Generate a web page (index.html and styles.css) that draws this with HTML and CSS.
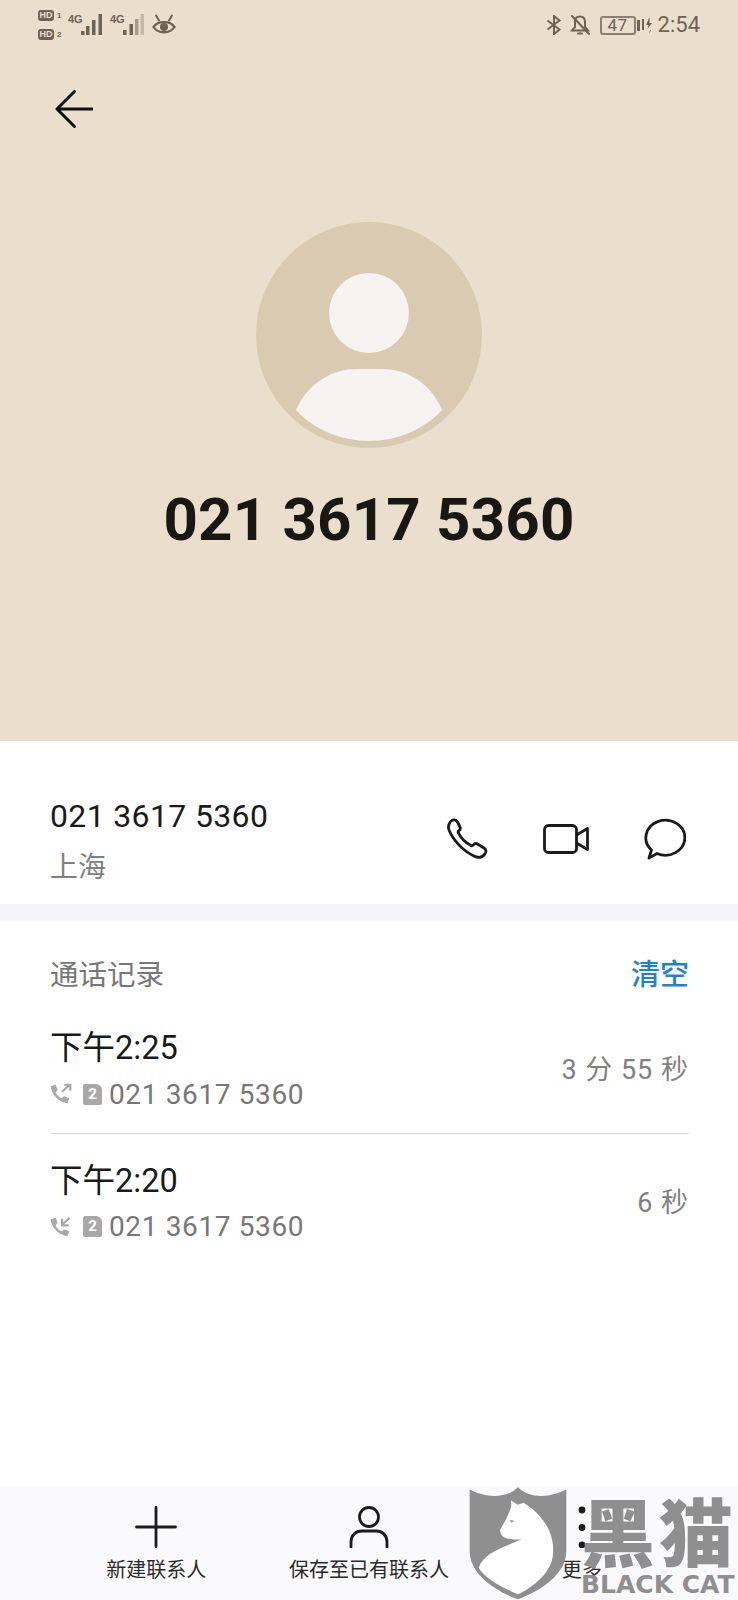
FILE: index.html
```html
<!DOCTYPE html>
<html lang="zh">
<head>
<meta charset="utf-8">
<title>通话记录</title>
<link rel="stylesheet" href="styles.css">
</head>
<body>
<div class="page">
  <header class="hero">
    <div class="status">
      <div class="status-left">
        <div class="hd-stack">
          <div class="hd-row"><span class="hd">HD</span><span class="sim-no">1</span></div>
          <div class="hd-row"><span class="hd">HD</span><span class="sim-no">2</span></div>
        </div>
        <div class="net">
          <span class="net-label">4G</span>
          <svg class="bars" viewBox="0 0 23 22"><rect x="1" y="17" width="3.5" height="4"/><rect x="6" y="12" width="3.5" height="9"/><rect x="12" y="6" width="3.5" height="15"/><rect x="18.5" y="0" width="3.5" height="21"/></svg>
        </div>
        <div class="net net-second">
          <span class="net-label">4G</span>
          <svg class="bars" viewBox="0 0 23 22"><rect x="1" y="16" width="3.5" height="5"/><rect x="7.5" y="10" width="3.5" height="11"/><rect x="13" y="5" width="3.5" height="16" opacity=".55"/><rect x="18.5" y="0" width="3.5" height="21" opacity=".3"/></svg>
        </div>
        <svg class="eye" viewBox="0 0 24 22" fill="none" stroke="#6d6355" stroke-width="2.3" stroke-linecap="round"><path d="M1.5 13 C6 6.5 18 6.5 22.5 13 C18 20 6 20 1.5 13Z"/><circle cx="12" cy="13" r="4" fill="#6d6355" stroke="none"/><path d="M4 1.5 L7 6.5 M20 1.5 L17 6.5" stroke-width="2"/></svg>
      </div>
      <div class="status-right">
        <svg class="bt" viewBox="0 0 16 20" fill="none" stroke="#6d6355" stroke-width="2"><path d="M1.5 5.5 L13.5 14.5 L8 19 V1 L13.5 5.5 L1.5 14.5"/></svg>
        <svg class="bell" viewBox="0 0 20 20" fill="none" stroke="#6d6355" stroke-width="2" stroke-linecap="round"><path d="M5 6.5 C5 3.5 7 1.5 10 1.5 C13 1.5 15 3.5 15 7 V12 L18 15.5 H2 L5 12 Z"/><path d="M8 18.5 H12"/><path d="M2 1 L19 19"/></svg>
        <div class="battery"><span class="battery-level">47</span></div>
        <span class="battery-nub"></span>
        <svg class="bolts" viewBox="0 0 12 18"><path d="M1 3 H3 V14 H1 Z" fill="#6d6355"/><path d="M8.5 1 L5 9 H7.5 L6.5 13 L11 7 H8.5 Z" fill="#6d6355"/><path d="M9 14 L8 18 L10 14 Z" fill="#6d6355"/></svg>
        <span class="clock">2:54</span>
      </div>
    </div>
    <svg class="back" viewBox="0 0 38 38" fill="none" stroke="#0d0d0d" stroke-width="3" stroke-linecap="round" stroke-linejoin="round"><path d="M37 19 H2 M19.5 1.5 L2 19 L19.5 36.5"/></svg>
    <svg class="avatar" viewBox="0 0 226 226"><circle cx="113" cy="113" r="113" fill="#d8cbb1"/><circle cx="113" cy="91" r="40" fill="#f6f3f0"/><path d="M40 188 C52 160 78 147 100 147 H126 C150 147 174 160 186 188 C168 208 140 219 113 219 C86 219 58 208 40 188 Z" fill="#f6f3f0"/></svg>
    <h1 class="title">021 3617 5360</h1>
  </header>

  <section class="info">
    <div class="info-text">
      <div class="info-number">021 3617 5360</div>
      <div class="info-place">上海</div>
    </div>
    <div class="actions">
      <svg class="act-phone" viewBox="0 0 42 42" fill="none" stroke="#1a1a1a" stroke-width="2.8" stroke-linejoin="round"><path d="M4.5 3.5 C7 1 10 1.5 11.5 4 L14 9 C14.8 10.5 14 12 12.5 13 C12 13.5 12 14 12.3 14.7 C14.5 19.5 20 25 25 27.5 C26 28 26.8 27.5 27.3 27 C28.5 25.5 30 25 31.5 26 L38 30 C40.5 31.5 40.5 34.5 38.5 36.5 C36 39.5 32 40 28 38 C17 33 7 22 3 12 C2 9 2.5 6 4.5 3.5 Z"/></svg>
      <svg class="act-cam" viewBox="0 0 46 30" fill="none" stroke="#1a1a1a" stroke-width="2.8" stroke-linejoin="round"><rect x="1.5" y="1.5" width="32" height="27" rx="4"/><path d="M33.5 11 L44.5 4.5 V25.5 L33.5 19"/></svg>
      <svg class="act-msg" viewBox="0 0 42 42" fill="none" stroke="#1a1a1a" stroke-width="2.8" stroke-linejoin="round"><path d="M7.5 32 A19.5 17.5 0 1 1 13 35.5 L5 40 Z"/></svg>
    </div>
  </section>

  <div class="band"></div>

  <section class="log">
    <div class="log-head">
      <span class="log-title">通话记录</span>
      <span class="log-clear">清空</span>
    </div>
    <div class="call">
      <div class="call-main">
        <div class="call-time">下午2:25</div>
        <div class="call-sub">
          <svg class="dir" viewBox="0 0 22 20" fill="none" stroke="#a8a8a8" stroke-width="2"><path d="M1.5 3 C2.5 11 9 17.5 17 18.5 L18.5 14 L14 12 L11.5 14 C9 13 7 11 6 8.5 L8 6 L6 1.5 Z" fill="#a8a8a8" stroke="none"/><path d="M12 8 L19 1.5 M14 1.5 H19.5 V7"/></svg>
          <span class="sim">2</span>
          <span class="call-number">021 3617 5360</span>
        </div>
      </div>
      <div class="call-duration">3 分 55 秒</div>
    </div>
    <div class="call call-last">
      <div class="call-main">
        <div class="call-time">下午2:20</div>
        <div class="call-sub">
          <svg class="dir" viewBox="0 0 22 20" fill="none" stroke="#a8a8a8" stroke-width="2"><path d="M1.5 3 C2.5 11 9 17.5 17 18.5 L18.5 14 L14 12 L11.5 14 C9 13 7 11 6 8.5 L8 6 L6 1.5 Z" fill="#a8a8a8" stroke="none"/><path d="M19 1.5 L12 8 M12 2.5 V8.5 H18"/></svg>
          <span class="sim">2</span>
          <span class="call-number">021 3617 5360</span>
        </div>
      </div>
      <div class="call-duration">6 秒</div>
    </div>
  </section>

  <nav class="tabs">
    <div class="tab">
      <svg class="tab-icon" viewBox="0 0 42 42" fill="none" stroke="#1c1c1c" stroke-width="2.8" stroke-linecap="round"><path d="M21 1.5 V40.5 M1.5 21 H40.5"/></svg>
      <span class="tab-label">新建联系人</span>
    </div>
    <div class="tab">
      <svg class="tab-icon" viewBox="0 0 42 42" fill="none" stroke="#1c1c1c" stroke-width="2.8" stroke-linecap="round"><circle cx="21" cy="11" r="9.5"/><path d="M3 41 V36 C3 29 8 25 14 25 H28 C34 25 39 29 39 36 V41"/></svg>
      <span class="tab-label">保存至已有联系人</span>
    </div>
    <div class="tab">
      <svg class="tab-icon" viewBox="0 0 42 42" fill="#1c1c1c"><circle cx="21" cy="4" r="3.4"/><circle cx="21" cy="21.5" r="3.4"/><circle cx="21" cy="39" r="3.4"/></svg>
      <span class="tab-label">更多</span>
    </div>
  </nav>

  <div class="mark">
    <svg class="mark-shield" viewBox="0 0 300 345"><path d="M2 10 C44 35 114 40 147 3 C179 40 249 35 292 10 L292 195 C292 265 214 315 147 340 C79 315 2 265 2 195 Z" fill="#8f8f8f"/><path d="M126 43 L146 56 L164 50 C220 85 258 140 252 205 C248 262 190 305 147 325 C100 305 45 275 29 245 C45 200 100 185 158 160 C135 162 115 158 108 155 C97 152 92 140 94 130 L112 98 C118 80 130 70 126 43 Z" fill="#fff"/><path d="M122 102 L136 104 L128 110 Z" fill="#8f8f8f"/></svg>
    <div class="mark-text">
      <div class="mark-cn">黑猫</div>
      <div class="mark-en">BLACK CAT</div>
    </div>
  </div>
</div>
</body>
</html>
```

FILE: styles.css
```css
* { box-sizing: border-box; }
html, body { margin: 0; padding: 0; background: #fff; }
body { font-family: Roboto, "Noto Sans CJK SC", sans-serif; color: #1a1a1a; }
svg { display: block; flex: none; }
.page { position: relative; width: 738px; height: 1600px; overflow: hidden; display: flex; flex-direction: column; background: #fff; }

.hero { height: 741px; background: #eadfcc; display: flex; flex-direction: column; flex: none; }
.status { display: flex; justify-content: space-between; align-items: center; height: 50px; padding: 0 38px; color: #6d6355; }
.status-left, .status-right { display: flex; align-items: center; }
.hd-stack { display: flex; flex-direction: column; gap: 8px; }
.hd-row { display: flex; align-items: center; gap: 3px; }
.hd { width: 16px; height: 11px; border-radius: 3px; background: #6d6355; color: #eadfcc; font: 700 9px/11px "Liberation Sans", sans-serif; text-align: center; }
.sim-no { font: 700 8px/10px "Liberation Sans", sans-serif; width: 6px; }
.net { position: relative; margin-left: 5px; width: 35px; height: 22px; }
.net-second { margin-left: 7px; }
.net-label { position: absolute; left: 0; top: -1px; font: 700 11px/12px "Liberation Sans Narrow", "Liberation Sans", sans-serif; }
.bars { position: absolute; right: 0; top: 0; width: 23px; height: 22px; fill: #6d6355; }
.eye { width: 24px; height: 22px; margin-left: 7px; }
.bt { width: 16px; height: 20px; }
.bell { width: 20px; height: 20px; margin-left: 8px; }
.battery { width: 36px; height: 19px; border: 2px solid #8a8071; border-radius: 3px; margin-left: 10px; display: flex; align-items: center; justify-content: center; }
.battery-level { font: 400 17px/17px Roboto, sans-serif; letter-spacing: .5px; }
.battery-nub { width: 3px; height: 11px; background: #6d6355; margin-left: 1px; }
.bolts { width: 12px; height: 18px; margin-left: 1px; }
.clock { font: 400 22px/26px Roboto, sans-serif; margin-left: 5px; }

.back { width: 38px; height: 38px; margin: 40px 0 0 55px; }
.avatar { width: 226px; height: 226px; margin: 94px auto 0; }
.title { margin: 34px 0 0; text-align: center; font: 700 60px/76px Roboto, sans-serif; letter-spacing: .2px; color: #1a1611; }

.info { height: 163px; padding: 32px 52px 0 50px; display: flex; align-items: center; justify-content: space-between; flex: none; }
.info-text { margin-top: 4px; }
.info-number { font-size: 32px; line-height: 44px; letter-spacing: .35px; }
.info-place { font-size: 28px; line-height: 40px; color: #808080; margin-top: 10px; }
.actions { display: flex; align-items: center; gap: 55px; }
.act-phone, .act-msg { width: 42px; height: 42px; }
.act-cam { width: 46px; height: 30px; }

.band { height: 17px; background: #f5f4f6; flex: none; }

.log { padding: 0 49px 0 50px; flex: 1; }
.log-head { display: flex; justify-content: space-between; align-items: center; height: 59px; margin-top: 22px; }
.log-title { font-size: 28.5px; color: #777; }
.log-clear { font-size: 29px; font-weight: 500; color: #1a83d6; position: relative; top: -1px; }
.call { display: flex; justify-content: space-between; align-items: center; height: 132px; border-bottom: 1px solid #d9d9d9; padding-top: 6px; }
.call-last { border-bottom: 0; }
.call-time { font-size: 32.5px; line-height: 44px; }
.call-sub { display: flex; align-items: center; margin-top: 3px; height: 42px; }
.dir { width: 24px; height: 22px; margin-left: -1px; }
.sim { width: 19px; height: 21px; margin-left: 10px; background: #a8a8a8; color: #fff; font: 700 15px/21px Roboto, sans-serif; text-align: center; border-radius: 2px 6px 2px 2px; }
.call-number { font-size: 28px; letter-spacing: .63px; color: #777; margin-left: 7px; }
.call-duration { font-size: 27px; color: #808080; letter-spacing: 1px; margin-bottom: 6px; }

.tabs { height: 114px; background: #faf9fb; padding: 20px 50px 0; display: grid; grid-template-columns: repeat(3, 1fr); flex: none; }
.tab { display: flex; flex-direction: column; align-items: center; }
.tab-icon { width: 42px; height: 42px; }
.tab-label { font-size: 20px; line-height: 28px; margin-top: 8px; color: #2a2a2a; white-space: nowrap; }

.mark { position: absolute; left: 469px; top: 1486px; display: flex; }
.mark-shield { width: 100px; height: 115px; }
.mark-text { margin: 6px 0 0 12px; color: #8f8f8f; }
.mark-cn { font: 900 74px/74px "Noto Sans CJK SC", sans-serif; letter-spacing: 4px; white-space: nowrap; }
.mark-en { font: 700 25px/24px "DejaVu Sans", sans-serif; white-space: nowrap; margin-top: 7px; }
```
